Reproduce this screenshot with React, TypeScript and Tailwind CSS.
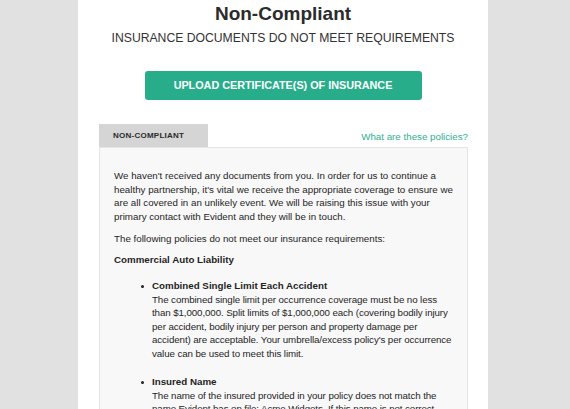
const L = ({ children }: { children: React.ReactNode }) => (
  <span className="block whitespace-nowrap">{children}</span>
);

export default function App() {
  return (
    <div className="h-[409px] overflow-hidden bg-[#e1e1e1] font-['Liberation_Sans',Arial,sans-serif]">
      <div className="ml-[78px] w-[410px] h-full bg-white flex flex-col items-center">
        <h1 className="pt-[3px] text-[19px] leading-[22px] font-bold text-[#2b2b2b]">Non-Compliant</h1>
        <div className="mt-[6px] text-[12.2px] leading-[14px] text-[#333]">INSURANCE DOCUMENTS DO NOT MEET REQUIREMENTS</div>
        <div className="mt-[26px] w-[277px] h-[29px] shrink-0 rounded-[3px] bg-[#28ad8b] text-white font-bold text-[10.8px] leading-none flex items-center justify-center">
          UPLOAD CERTIFICATE(S) OF INSURANCE
        </div>
        <div className="mt-[24px] w-[369px] self-start ml-[21px]">
          <div className="flex justify-between items-center">
            <div className="w-[109px] h-[23px] bg-[#d5d5d5] pl-[14px] flex items-center text-[8px] font-bold tracking-[0.25px] text-[#2a2a2a]">
              NON-COMPLIANT
            </div>
            <a className="text-[9.75px] leading-[13px] text-[#2fb08f] mt-[1px]">What are these policies?</a>
          </div>
          <div className="border border-[#e4e4e4] bg-[#f8f8f8] px-[14px] pt-[21px] pb-[20px] text-[9.75px] leading-[13.5px] text-[#1f1f1f]">
            <p>
              We haven't received any documents from you. In order for us to continue a healthy partnership, it's vital we receive the appropriate coverage to ensure we are all covered in an unlikely event. We will be raising this issue with your primary contact with Evident and they will be in touch.
            </p>
            <p className="mt-[9px]">The following policies do not meet our insurance requirements:</p>
            <p className="mt-[7px] font-bold">Commercial Auto Liability</p>
            <ul className="mt-[13px] pl-[24px] flex flex-col gap-[15px]">
              <li className="flex">
                <span className="w-[14px] shrink-0 flex pt-[6px] pl-[3px]">
                  <span className="w-[2.5px] h-[2.5px] rounded-full bg-[#222]" />
                </span>
                <div className="tracking-[-0.1px]">
                  <div className="font-bold tracking-normal">Combined Single Limit Each Accident</div>
                  <L>The combined single limit per occurrence coverage must be no less</L>
                  <L>than $1,000,000. Split limits of $1,000,000 each (covering bodily injury</L>
                  <L>per accident, bodily injury per person and property damage per</L>
                  <L>accident) are acceptable. Your umbrella/excess policy's per occurrence</L>
                  <L>value can be used to meet this limit.</L>
                </div>
              </li>
              <li className="flex">
                <span className="w-[14px] shrink-0 flex pt-[6px] pl-[3px]">
                  <span className="w-[2.5px] h-[2.5px] rounded-full bg-[#222]" />
                </span>
                <div className="tracking-[-0.1px]">
                  <div className="font-bold tracking-normal">Insured Name</div>
                  <L>The name of the insured provided in your policy does not match the</L>
                  <L>name Evident has on file: Acme Widgets. If this name is not correct</L>
                  <L>please contact us so that we can update our records.</L>
                </div>
              </li>
            </ul>
          </div>
        </div>
      </div>
    </div>
  );
}
